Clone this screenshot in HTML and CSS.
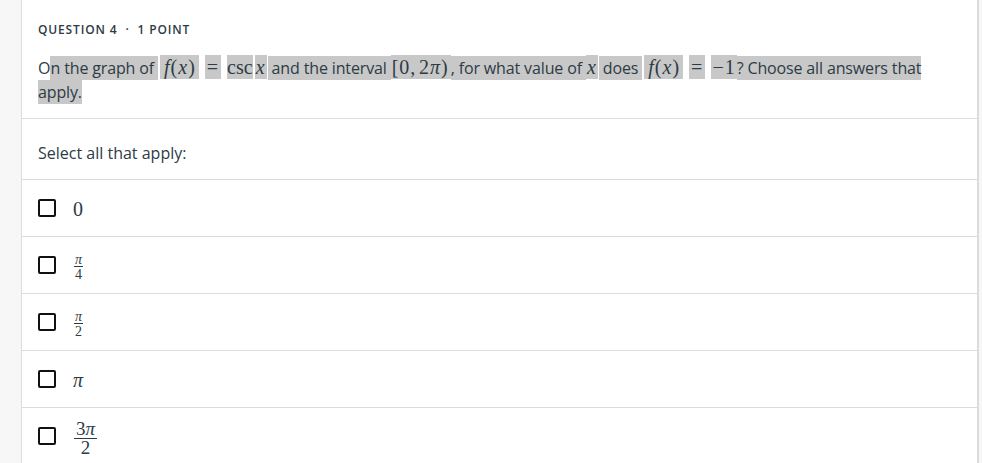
FILE: index.html
```html
<!DOCTYPE html>
<html>
<head>
<meta charset="utf-8">
<link rel="stylesheet" href="styles.css">
</head>
<body>
<div class="card">
  <div class="qhead">
    <div class="label">QUESTION 4 <span class="dot">·</span> 1 POINT</div>
    <div class="prompt">O<span class="hl">n the graph of </span><span class="hl m fx"><i>f</i>(<i>x</i>)</span><span class="hl m rel">=</span><span class="hl m op">csc</span><span class="hl m var"><i>x</i></span><span class="hl"> and the interval </span><span class="hl m iv">[0,&#8202;2<i>π</i>)</span><span class="hl">, for what value of </span><span class="hl m var"><i>x</i></span><span class="hl"> does </span><span class="hl m fx"><i>f</i>(<i>x</i>)</span><span class="hl m rel">=</span><span class="hl m neg">−1</span><span class="hl">? Choose all answers that</span><br><span class="hl">apply.</span></div>
  </div>
  <div class="instr">Select all that apply:</div>
  <div class="opt"><span class="box"></span><span class="mv">0</span></div>
  <div class="opt"><span class="box"></span><span class="frac small"><span class="num"><i>π</i></span><span class="den">4</span></span></div>
  <div class="opt"><span class="box"></span><span class="frac small"><span class="num"><i>π</i></span><span class="den">2</span></span></div>
  <div class="opt"><span class="box"></span><span class="mv"><i>π</i></span></div>
  <div class="opt"><span class="box"></span><span class="frac big"><span class="num">3<i>π</i></span><span class="den">2</span></span></div>
</div>
</body>
</html>
```
FILE: styles.css
```css
html, body {
  margin: 0;
  padding: 0;
  background: #f7f7f7;
}
body {
  font-family: "Open Sans", "Liberation Sans", sans-serif;
  color: #2d3b45;
}
.card {
  margin-left: 21px;
  width: 958px;
  background: #fff;
  border-left: 1px solid #dcdcdc;
  border-right: 2px solid #dcdcdc;
  height: 463px;
  box-sizing: border-box;
}
.qhead {
  padding: 21px 16px 14px 16px;
  border-bottom: 1px solid #dcdcdc;
}
.label {
  font-size: 12px;
  font-weight: 600;
  letter-spacing: 0.85px;
  line-height: 18px;
  color: #2d3b45;
}
.dot {
  margin: 0 4px;
}
.prompt {
  margin-top: 16px;
  font-size: 16px;
  line-height: 24px;
}
.hl {
  background: #c8c8c8;
  padding: 1px 0;
  letter-spacing: -0.14px;
}
.m {
  font-family: "Liberation Serif", "DejaVu Serif", serif;
  font-size: 20px;
  letter-spacing: 1px;
  display: inline-block;
  line-height: 24px;
  padding: 0;
}
.m.fx {
  padding: 0 3px 0 4px;
  margin-left: 2px;
}
.m.rel {
  margin: 0 6px;
  padding: 0 2px;
}
.m.op {
  letter-spacing: 0;
  margin-right: 2px;
}
.m.var {
  padding: 0 1px;
  margin-right: 1px;
}
.m.iv {
  padding: 0 2px 0 1px;
}
.m.neg {
  padding: 0 1px 0 1px;
}
.instr {
  font-size: 16px;
  line-height: 24px;
  padding: 22px 16px 14px;
  border-bottom: 1px solid #dcdcdc;
}
.opt {
  height: 56px;
  border-bottom: 1px solid #dcdcdc;
  display: flex;
  align-items: center;
  padding-left: 16px;
}
.opt:last-child {
  border-bottom: none;
}
.box {
  width: 14px;
  height: 14px;
  border: 2px solid #111;
  border-radius: 2px;
  margin-right: 17px;
  flex: none;
}
.mv {
  font-family: "Liberation Serif", "DejaVu Serif", serif;
  font-size: 20px;
  line-height: 20px;
  margin-top: 2px;
}
.frac {
  display: inline-flex;
  flex-direction: column;
  align-items: center;
  font-family: "Liberation Serif", "DejaVu Serif", serif;
}
.frac .num {
  border-bottom: 1px solid #2d3b45;
  padding: 0 1px;
}
.frac.small {
  font-size: 14px;
  line-height: 11px;
  margin-left: 1px;
  margin-top: 4px;
}
.frac.small .num {
  padding: 0 1px 1px;
}
.frac.small .den {
  padding-top: 2px;
}
.frac.big {
  font-size: 19px;
  line-height: 16px;
  margin-left: 1px;
  margin-top: 4px;
}
.frac.big .num {
  padding: 0 2px 1px;
}
.frac.big .den {
  padding-top: 1px;
}
```
